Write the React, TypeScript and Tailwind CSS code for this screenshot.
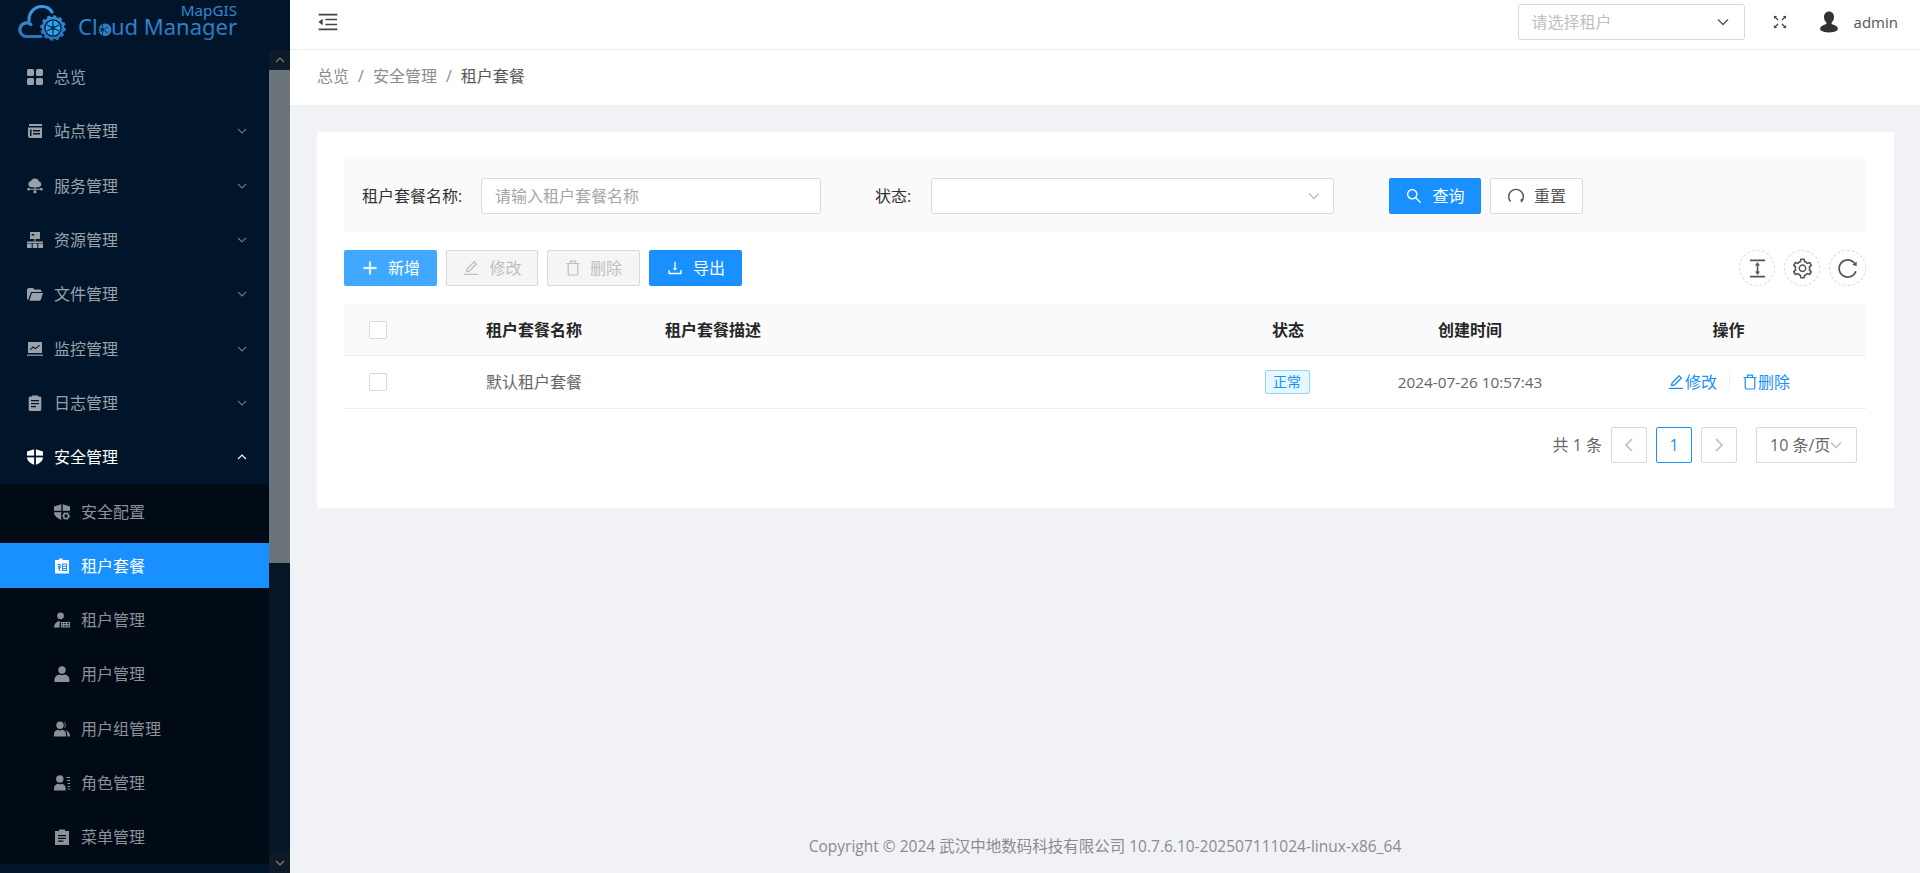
import React from "react";
import {
  AiOutlineColumnHeight,
  AiOutlineDownload,
  AiOutlineEdit,
  AiOutlineFullscreen,
  AiOutlineMenuFold,
  AiOutlinePlus,
  AiOutlineReload,
  AiOutlineSearch,
  AiOutlineSetting,
} from "react-icons/ai";

const Ico = ({ children, size = 16 }: { children: React.ReactNode; size?: number }) => (
  <svg width={size} height={size} viewBox="0 0 16 16" fill="currentColor" className="shrink-0">
    {children}
  </svg>
);

const SHIELD = "M8 0 16 2.400V8C16 12 12.500 14.800 8 16 3.500 14.800 0 12 0 8V2.400z";

const icons: Record<string, React.ReactNode> = {
  grid: (
    <Ico>
      <rect x="0" y="0" width="7" height="7" rx="1.6" />
      <rect x="9" y="0" width="7" height="7" rx="1.6" />
      <rect x="0" y="9" width="7" height="7" rx="1.6" />
      <rect x="9" y="9" width="7" height="7" rx="1.6" />
    </Ico>
  ),
  site: (
    <Ico>
      <path d="M2 1h13v2H2zM1 4.500h14V15H3a2 2 0 0 1-2-2zM3 6.500V13h1.500V6.500zM6 7v1.600h7V7zm0 3v1.600h7V10z" fillRule="evenodd" />
    </Ico>
  ),
  service: (
    <Ico>
      <path d="M4 9.200A3 3 0 0 1 3.600 3.300 4.600 4.600 0 0 1 12.200 3.400 3 3 0 0 1 12 9.200z" />
      <path d="M7.400 9h1.200v3.400H7.400zM1 10.700h14v1H1z" />
      <rect x="0.400" y="10" width="2.400" height="2.400" />
      <rect x="13.200" y="10" width="2.400" height="2.400" />
      <rect x="6.600" y="12.600" width="2.800" height="2.600" />
    </Ico>
  ),
  resource: (
    <Ico>
      <path d="M3 0h10v7H3zM4.600 2v1.600h2.600V2z" fillRule="evenodd" />
      <path d="M7.400 7h1.200v2.500H7.400z" />
      <path d="M0 9.500h16V11H0zM0 11.500h4.700V16H0zM5.700 11.500h4.600V16H5.700zM11.300 11.500H16V16h-4.700z" />
    </Ico>
  ),
  folder: (
    <Ico>
      <path d="M0 4a2 2 0 0 1 2-2h4l1.500 1.500H13a1.500 1.500 0 0 1 1.500 1.500v1H4L1.200 14A2 2 0 0 1 0 12z" />
      <path d="M4.800 7H16l-2.200 6.800a1.500 1.500 0 0 1-1.400 1H2.400z" />
    </Ico>
  ),
  monitor: (
    <Ico>
      <path d="M1 1h14v11H1zM3 8.400l.8.7L6 6.700l2.400 1.600L13 4.600l-.7-.8L8.300 7 5.900 5.300z" fillRule="evenodd" />
      <path d="M0 13.600h16v1.200H0z" />
    </Ico>
  ),
  log: (
    <Ico>
      <path d="M3 1.500h2V.5h6v1h2A1.300 1.300 0 0 1 14.300 3v11.600a1.300 1.300 0 0 1-1.300 1.300H3a1.300 1.300 0 0 1-1.300-1.300V3A1.300 1.300 0 0 1 3 1.500zM4 5v1.200h8V5zm0 3v1.200h8V8zm0 3v1.200h5V11z" fillRule="evenodd" />
    </Ico>
  ),
  shield: (
    <Ico>
      <path d={SHIELD} />
      <rect x="7.100" y="0" width="1.800" height="16" fill="#00152a" />
      <rect x="0" y="6.600" width="16" height="1.800" fill="#00152a" />
    </Ico>
  ),
  shieldCfg: (
    <Ico>
      <path d={SHIELD} />
      <rect x="7.300" y="0" width="1.400" height="16" fill="#000b16" />
      <rect x="0" y="6.800" width="16" height="1.400" fill="#000b16" />
      <circle cx="12" cy="12" r="4.800" fill="#000b16" />
      <circle cx="12" cy="12" r="2.400" fill="none" stroke="currentColor" strokeWidth="1.500" />
      <circle cx="12" cy="12" r="3.600" fill="none" stroke="currentColor" strokeWidth="1" strokeDasharray="1.400 2.100" />
    </Ico>
  ),
  pack: (
    <Ico>
      <path d="M1 2h4V.5h3.500V2H15v13.500H1zM3.500 6v1h2v.8h-2v1h1.400l-1.500 2 .7.6L5 9.700V13h1V9.600l.7.8.6-.7L6 8.300V7.800h1.400v-1H6V5.500H5V6zM8 5.500V13h5V5.500zm1 1h3v1.300H9zm0 2.200h3V10H9zM9 11h3v1H9z" fillRule="evenodd" />
    </Ico>
  ),
  tenant: (
    <Ico>
      <circle cx="6.500" cy="3.800" r="3.400" />
      <path d="M0 15.500c0-3 1.600-5.600 5-6.600l1.600 1-1 1.200v4.400z" />
      <path d="M7 10h9v5.500H7zM8 11v1h1v-1zm2.200 0v1h1.600v-1zm3 0v1H15v-1zM8 13.200v1.200h1v-1.200zm2.200 0v1.200h1.600v-1.200zm3 0v1.200H15v-1.200z" fillRule="evenodd" />
    </Ico>
  ),
  user: (
    <Ico>
      <circle cx="8" cy="4" r="3.700" />
      <path d="M.5 15.900v-2.200C.5 11 3 8.800 5.600 8.600c1.500 1 3.300 1 4.800 0 2.600.2 5.100 2.400 5.100 5.100v2.200z" />
    </Ico>
  ),
  users: (
    <Ico>
      <circle cx="6" cy="4.200" r="3.700" />
      <path d="M0 15.600v-2.500C0 10.700 2 9 4 8.800c1.300.8 2.800.8 4 0 2 .2 4 1.900 4 4.300v2.500z" />
      <path d="M9.600.6a4 4 0 0 1 0 7.200A6 6 0 0 0 9.600.6zM11 9c2.700.7 5 2.800 5 5.400v1.200h-2.700v-2.300c0-1.700-.9-3.200-2.300-4.300z" />
    </Ico>
  ),
  role: (
    <Ico>
      <circle cx="5.800" cy="3.900" r="3.700" />
      <path d="M0 15.600v-2.400C0 10.700 2 8.900 3.800 8.700c1.300.8 2.800.8 4 0 1.900.2 3.800 2 3.800 4.500v2.400z" />
      <path d="M12.400 2H16v1h-3.600zM13 5H16v1h-3zM13.600 8H16v1h-2.400zM13.600 11H16v1h-2.400zM13.600 13.500H16v1h-2.400z" />
    </Ico>
  ),
  menu: (
    <Ico>
      <path d="M1 2h4V.5h6V2h4v14H1zM4 6v1.200h8V6zm0 2.800V10h8V8.800zm0 2.800v1.200h5.500v-1.200z" fillRule="evenodd" />
    </Ico>
  ),
};

const Chevron = ({ up = false, className = "" }: { up?: boolean; className?: string }) => (
  <svg width="10" height="10" viewBox="0 0 10 10" fill="none" stroke="currentColor" strokeWidth="1.100" className={className}>
    <path d={up ? "M1 7 5 3l4 4" : "M1 3l4 4 4-4"} />
  </svg>
);

const Logo = () => (
  <svg width="250" height="50" viewBox="0 0 250 50" className="block">
    <defs>
      <linearGradient id="lg2" gradientUnits="userSpaceOnUse" x1="0" y1="0" x2="0" y2="42">
        <stop offset="0" stopColor="#3fa2ec" />
        <stop offset="1" stopColor="#2a6db5" />
      </linearGradient>
    </defs>
    <g fill="none" stroke="url(#lg2)" strokeWidth="3.200">
      <path d="M31 24.500A6.800 6.800 0 1 0 26 36.500H41" strokeLinecap="round" />
      <path d="M29 21C28.500 12 35 6.500 42 6.500c4.500 0 8 2 10 5.500" strokeLinecap="round" />
      <circle cx="53" cy="28" r="10" strokeWidth="2.600" />
      <circle cx="53" cy="28" r="11.500" strokeWidth="2.600" strokeDasharray="3.200 2.800" />
    </g>
    <circle cx="53" cy="28" r="7.400" fill="#27a7ee" />
    <g stroke="#0b2a4c" strokeWidth="1.100">
      <path d="M53 21v7M47 25l6 3M47 31l6-3M53 35v-7M59 31l-6-3M59 25l-6 3" />
    </g>
    <circle cx="53" cy="28" r="2.200" fill="#0b2a4c" />
    <text x="237" y="16" textAnchor="end" fontFamily="'Noto Sans',sans-serif" fontSize="15.200" fill="#3585cf">
      MapGIS
    </text>
    <text x="78" y="35" fontFamily="'Noto Sans',sans-serif" fontSize="22" fill="url(#lg2)">
      Cl<tspan fill="transparent">o</tspan>ud Manager
    </text>
    <path d="M102.500 24a6.300 6.300 0 1 1 0 11.500 6.300 6.300 0 0 1 0-11.500z" fill="#2c7fc9" />
    <circle cx="102.500" cy="29.700" r="2" fill="#0b2a4c" />
    <path d="M102.500 23.500v4M97 27l3.500 2M97 33l3.500-2M102.500 36v-4M108 33l-3.500-2M108 27l-3.500 2" stroke="#0b2a4c" strokeWidth="0.900" />
  </svg>
);

const MenuItem = ({
  icon,
  label,
  arrow,
  open,
}: {
  icon: string;
  label: string;
  arrow?: boolean;
  open?: boolean;
}) => (
  <div className={`h-[54.3px] flex items-center pl-[27px] pr-[22px] ${open ? "text-white" : "text-[#99a1a9]"}`}>
    {icons[icon]}
    <span className="ml-[11px] flex-1 text-[16px] leading-none">{label}</span>
    {arrow && <Chevron up={open} className={open ? "text-white" : "text-[#6b7682]"} />}
  </div>
);

const SubItem = ({ icon, label, active }: { icon: string; label: string; active?: boolean }) => (
  <div className="h-[54.3px] flex items-center">
    <div
      className={`w-full h-[45px] flex items-center pl-[54px] ${active ? "bg-[#1890ff] text-white" : "text-[#8c9196]"}`}
    >
      {icons[icon]}
      <span className="ml-[11px] text-[16px] leading-none">{label}</span>
    </div>
  </div>
);

const Btn = ({
  icon,
  label,
  tone,
  w,
}: {
  icon: React.ReactNode;
  label: string;
  tone: "light" | "primary" | "disabled" | "default";
  w: string;
}) => {
  const toneCls = {
    light: "bg-[#40a9ff] text-white",
    primary: "bg-[#1890ff] text-white",
    disabled: "bg-[#f5f5f5] border border-[#d9d9d9] text-[#bfbfbf]",
    default: "bg-white border border-[#d9d9d9] text-[#555]",
  }[tone];
  return (
    <div className={`h-[36px] ${w} rounded-[2px] flex items-center justify-center gap-[9px] text-[16px] ${toneCls}`}>
      {icon}
      <span className="leading-none">{label}</span>
    </div>
  );
};

const Trash = ({ size = 16 }: { size?: number }) => (
  <svg width={size} height={size} viewBox="0 0 16 16" fill="none" stroke="currentColor" strokeWidth="1.200">
    <path d="M1.500 3.500h13M5.500 3.500V1.200h5v2.300M3.200 3.500v10.200a1.300 1.300 0 0 0 1.300 1.300h7a1.300 1.300 0 0 0 1.300-1.300V3.500" />
  </svg>
);

const RoundTool = ({ children, w = "w-[36px]" }: { children: React.ReactNode; w?: string }) => (
  <div className={`${w} h-[36px] rounded-full border border-dashed border-[#d9d9d9] flex items-center justify-center text-[#555] text-[23px]`}>
    {children}
  </div>
);

const Check = () => <div className="w-[18px] h-[18px] rounded-[2px] border border-[#d9d9d9] bg-white" />;

const PageBox = ({ children, active }: { children: React.ReactNode; active?: boolean }) => (
  <div
    className={`w-[36px] h-[36px] rounded-[2px] flex items-center justify-center bg-white border ${
      active ? "border-[#1890ff] text-[#1890ff]" : "border-[#d9d9d9] text-[#bfbfbf]"
    }`}
  >
    {children}
  </div>
);

const cols = "grid grid-cols-[126px_179px_570px_136px_230px_1fr] items-center";

export default function App() {
  return (
    <div className="h-[873px] w-[1920px] flex overflow-hidden bg-[#f0f2f5] font-['Open_Sans','Noto_Sans_CJK_SC',sans-serif]">
      <aside className="w-[290px] shrink-0 flex flex-col bg-[#00152a]">
        <div className="h-[50px] shrink-0">
          <Logo />
        </div>
        <div className="flex-1 flex min-h-0">
          <nav className="w-[269px] overflow-hidden">
            <MenuItem icon="grid" label="总览" />
            <MenuItem icon="site" label="站点管理" arrow />
            <MenuItem icon="service" label="服务管理" arrow />
            <MenuItem icon="resource" label="资源管理" arrow />
            <MenuItem icon="folder" label="文件管理" arrow />
            <MenuItem icon="monitor" label="监控管理" arrow />
            <MenuItem icon="log" label="日志管理" arrow />
            <MenuItem icon="shield" label="安全管理" arrow open />
            <div className="bg-[#000b16]">
              <SubItem icon="shieldCfg" label="安全配置" />
              <SubItem icon="pack" label="租户套餐" active />
              <SubItem icon="tenant" label="租户管理" />
              <SubItem icon="user" label="用户管理" />
              <SubItem icon="users" label="用户组管理" />
              <SubItem icon="role" label="角色管理" />
              <SubItem icon="menu" label="菜单管理" />
            </div>
          </nav>
          <div className="w-[21px] flex flex-col bg-[#051626]">
            <div className="h-[20px] bg-[#0e1a26] flex items-center justify-center text-[#7a838c]">
              <Chevron up />
            </div>
            <div className="h-[493px] bg-[#6b737b]" />
            <div className="flex-1" />
            <div className="h-[20px] bg-[#0e1a26] flex items-center justify-center text-[#7a838c]">
              <Chevron />
            </div>
          </div>
        </div>
      </aside>

      <div className="flex-1 flex flex-col min-w-0">
        <header className="h-[50px] shrink-0 bg-white border-b border-[#eeeeee] flex items-center pl-[26px] pr-[22px] pb-[5px] text-[#555]">
          <AiOutlineMenuFold className="text-[24px] text-[#444]" />
          <div className="flex-1" />
          <div className="w-[227px] h-[36px] rounded-[3px] border border-[#d9d9d9] flex items-center pl-[13px] pr-[16px]">
            <span className="flex-1 text-[16px] text-[#bfbfbf] leading-none">请选择租户</span>
            <Chevron className="text-[#555] scale-125" />
          </div>
          <AiOutlineFullscreen className="ml-[26px] text-[18px] text-[#444]" />
          <svg width="24" height="24" viewBox="0 0 24 24" fill="#333" className="ml-[28px]">
            <path d="M12 1.500c3 0 5 2.400 5 5.600 0 2.400-1 4.400-2.400 5.500v1.400c2.600.8 5.400 2 6 3.400.4 1 .2 2.400-.4 3-1.800 1.300-5 2-8.200 2s-6.400-.7-8.200-2c-.6-.6-.8-2-.4-3 .6-1.400 3.400-2.600 6-3.400v-1.400C8 11.500 7 9.500 7 7.100c0-3.200 2-5.600 5-5.600z" />
          </svg>
          <span className="ml-[13px] text-[15px] text-[#555] leading-none">admin</span>
        </header>

        <div className="h-[55px] shrink-0 bg-white flex items-center pl-[27px] text-[16px] text-[#8c8c8c] pb-[3px]">
          <span>总览</span>
          <span className="mx-[9px]">/</span>
          <span>安全管理</span>
          <span className="mx-[9px]">/</span>
          <span className="text-[#595959]">租户套餐</span>
        </div>

        <main className="flex-1 pt-[27px] px-[27px] pr-[26px]">
          <section className="bg-white h-[376px] pt-[27px] px-[27px] pr-[28px]">
            <div className="h-[73px] bg-[#fafafa] flex items-center pl-[18px] text-[16px]">
              <span className="w-[119px] text-[#333]">租户套餐名称:</span>
              <div className="w-[340px] h-[36px] rounded-[3px] border border-[#d9d9d9] bg-white flex items-center pl-[13px] text-[#a6a6a6]">
                请输入租户套餐名称
              </div>
              <span className="ml-[54px] w-[56px] text-[#333]">状态:</span>
              <div className="w-[403px] h-[36px] rounded-[3px] border border-[#d9d9d9] bg-white flex items-center justify-end pr-[14px] text-[#bfbfbf]">
                <Chevron className="scale-125" />
              </div>
              <div className="ml-[55px]">
                <Btn w="w-[92px]" tone="primary" label="查询" icon={<AiOutlineSearch className="text-[18px]" />} />
              </div>
              <div className="ml-[9px]">
                <Btn
                  w="w-[93px]"
                  tone="default"
                  label="重置"
                  icon={
                    <svg width="18" height="18" viewBox="0 0 16 16" fill="none" stroke="currentColor" strokeWidth="1.300">
                      <path d="M3.200 13A6.500 6.500 0 1 1 12.800 13" />
                      <path d="M12.800 10.500V13.500" />
                    </svg>
                  }
                />
              </div>
            </div>

            <div className="mt-[18px] h-[36px] flex items-center gap-[9px]">
              <Btn w="w-[93px]" tone="light" label="新增" icon={<AiOutlinePlus className="text-[18px] stroke-[30]" />} />
              <Btn w="w-[92px]" tone="disabled" label="修改" icon={<AiOutlineEdit className="text-[18px]" />} />
              <Btn w="w-[93px]" tone="disabled" label="删除" icon={<Trash />} />
              <Btn w="w-[93px]" tone="primary" label="导出" icon={<AiOutlineDownload className="text-[18px]" />} />
              <div className="flex-1" />
              <RoundTool>
                <AiOutlineColumnHeight />
              </RoundTool>
              <RoundTool>
                <AiOutlineSetting />
              </RoundTool>
              <RoundTool w="w-[37px]">
                <AiOutlineReload />
              </RoundTool>
            </div>

            <div className="mt-[18px]">
              <div className={`${cols} h-[52px] bg-[#fafafa] border-b border-[#eeeeee] text-[16px] font-bold text-[#262626]`}>
                <div className="pl-[25px]">
                  <Check />
                </div>
                <div className="pl-[16px]">租户套餐名称</div>
                <div className="pl-[16px]">租户套餐描述</div>
                <div className="text-center pl-[2px]">状态</div>
                <div className="text-center">创建时间</div>
                <div className="text-center pl-[6px]">操作</div>
              </div>
              <div className={`${cols} h-[53px] border-b border-[#eeeeee] text-[16px] text-[#666]`}>
                <div className="pl-[25px]">
                  <Check />
                </div>
                <div className="pl-[16px]">默认租户套餐</div>
                <div />
                <div className="flex justify-center">
                  <div className="w-[45px] h-[24px] rounded-[2px] border border-[#91d5ff] bg-[#e6f7ff] text-[#1890ff] text-[14px] leading-none flex items-center justify-center">
                    正常
                  </div>
                </div>
                <div className="text-center text-[15.3px]">2024-07-26 10:57:43</div>
                <div className="flex items-center pl-[82px] text-[#1890ff]">
                  <AiOutlineEdit className="text-[18px]" />
                  <span className="leading-none">修改</span>
                  <div className="w-px h-[16px] bg-[#eeeeee] mx-[12px]" />
                  <Trash />
                  <span className="leading-none">删除</span>
                </div>
              </div>
            </div>

            <div className="mt-[18px] flex items-center justify-end pr-[9px] text-[16px] text-[#666]">
              <span className="mr-[9px]">共 1 条</span>
              <PageBox>
                <Chevron className="rotate-90 scale-150" />
              </PageBox>
              <div className="ml-[9px]">
                <PageBox active>1</PageBox>
              </div>
              <div className="ml-[9px]">
                <PageBox>
                  <Chevron className="-rotate-90 scale-150" />
                </PageBox>
              </div>
              <div className="ml-[19px] w-[101px] h-[36px] rounded-[2px] border border-[#d9d9d9] flex items-center pl-[13px]">
                <span className="leading-none">10 条/页</span>
                <Chevron className="text-[#bfbfbf] scale-125 ml-[1px]" />
              </div>
            </div>
          </section>
        </main>

        <footer className="h-[56px] shrink-0 flex items-start justify-center text-[15.5px] text-[#8c8c8c] pt-[18px]">
          Copyright © 2024 武汉中地数码科技有限公司 10.7.6.10-202507111024-linux-x86_64
        </footer>
      </div>
    </div>
  );
}
